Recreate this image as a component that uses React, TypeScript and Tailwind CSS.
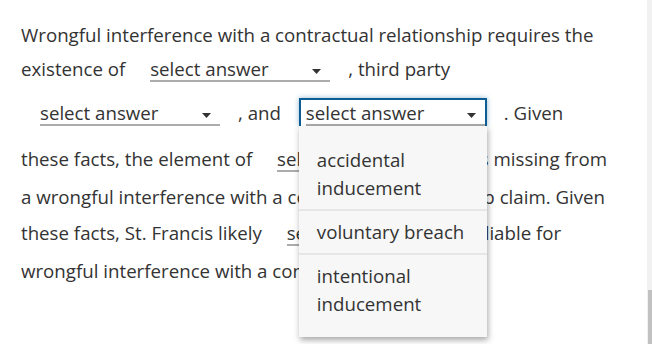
import React from "react";

function Arrow() {
  return (
    <svg width="9" height="5" viewBox="0 0 9 5" className="shrink-0 self-start mt-[11px]">
      <path d="M0 0H9L4.5 5Z" fill="#333333" />
    </svg>
  );
}

function Select({ className = "", width = "w-[180px]" }: { className?: string; width?: string }) {
  return (
    <span
      className={`inline-flex ${width} justify-between border-b-2 border-[#acacac] pr-[9px] leading-[22px] align-baseline ${className}`}
    >
      <span>select answer</span>
      <Arrow />
    </span>
  );
}

function FocusedSelect() {
  return (
    <span className="relative inline-block align-baseline ml-[13px] mr-[17px] border-2 border-b-0 border-[#0b5d94] pl-[5px] pt-[2px] shadow-[0_0_5px_rgba(11,93,148,0.45)] leading-[22px]">
      <Select width="w-[179px]" />
      <span className="absolute left-[-2px] top-full z-10 w-[188px] bg-[#f7f7f7] pt-[13px] pb-[12px] leading-[28px] shadow-[1px_3px_6px_rgba(0,0,0,0.35)] flex flex-col">
        <span className="px-[18px] py-[7px]">accidental<br />inducement</span>
        <span className="h-[2px] bg-[#e6e6e6]" />
        <span className="px-[18px] py-[7px] whitespace-nowrap">voluntary breach</span>
        <span className="h-[2px] bg-[#e6e6e6]" />
        <span className="px-[18px] py-[7px]">intentional<br />inducement</span>
      </span>
    </span>
  );
}

export default function App() {
  return (
    <div
      className="flex h-[344px] w-[652px] overflow-hidden bg-white text-[18.7px] text-[#333333]"
      style={{ fontFamily: '"Open Sans", "Liberation Sans", sans-serif' }}
    >
      <div className="flex-1 pl-[21px] pt-[18px] whitespace-nowrap">
        <div className="leading-[34px]">
          Wrongful interference with a contractual relationship requires the
        </div>
        <div className="leading-[34px]">
          existence of <Select className="ml-[20px] mr-[18px]" />, third party
        </div>
        <div className="leading-[54px]">
          <Select className="ml-[19px] mr-[18px]" />, and <FocusedSelect />. Given
        </div>
        <div className="leading-[38px]">
          these facts, the element of <Select className="ml-[20px] mr-[18px]" />is missing from
        </div>
        <div className="leading-[37px]">
          a wrongful interference with a contractual relationship claim. Given
        </div>
        <div className="leading-[36px]">
          these facts, St. Francis likely <Select className="ml-[20px] mr-[18px]" />liable for
        </div>
        <div className="leading-[40px]">
          wrongful interference with a contractual relationship.
        </div>
      </div>
      <div className="flex w-[5px] flex-col bg-[#f1f1f1]">
        <div className="flex-1" />
        <div className="ml-[1px] h-[54px] bg-[#c1c1c1]" />
      </div>
    </div>
  );
}
